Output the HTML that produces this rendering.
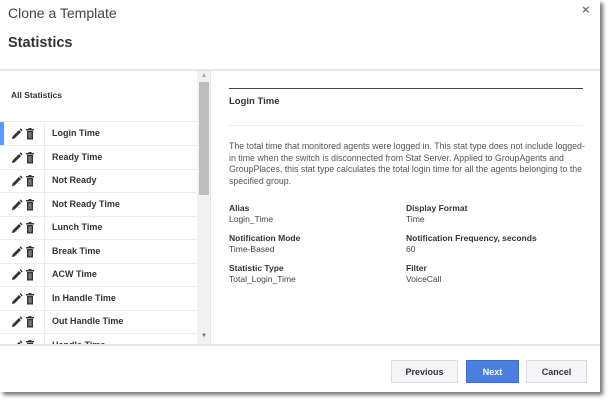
<!DOCTYPE html>
<html><head><style>
*{margin:0;padding:0;box-sizing:border-box}
body{width:615px;height:406px;background:#fff;font-family:"Liberation Sans",sans-serif;position:relative;overflow:hidden;color:#333}
.dlg{position:absolute;left:0;top:0;width:600px;height:392px;background:#fff;box-shadow:3px 3px 4px rgba(0,0,0,.55)}
.a{position:absolute;white-space:nowrap}
.row{position:absolute;left:0;width:197px;height:24px;border-bottom:1px solid #ececec;font-size:9px;font-weight:bold;color:#333}
.row .t{position:absolute;left:52px;top:6px}
.row .c{position:absolute;left:44px;top:0;bottom:0;border-left:1px solid #ececec}
.ic{position:absolute;left:11px;top:6px}
.lb{font-size:8.5px;font-weight:bold;color:#333}
.v{font-size:8.5px;color:#444}
.btn{position:absolute;top:360px;height:23px;font-size:9px;font-weight:bold;text-align:center;line-height:23px;border:1px solid #ddd;background:#f3f5f8;color:#333}
</style></head><body>
<div class="dlg">
<div class="a" style="left:8px;top:5px;font-size:14px;color:#444">Clone a Template</div>
<div class="a" style="left:582px;top:2px;font-size:13px;font-weight:bold;color:#777">×</div>
<div class="a" style="left:8px;top:35px;font-size:14.5px;font-weight:bold;color:#333">Statistics</div>
<div class="a" style="left:0;top:69px;width:600px;height:2px;background:#e6e6e6"></div>
<div class="a" style="left:11px;top:90px;font-size:8.5px;font-weight:bold">All Statistics</div>
<div class="a" style="left:0;top:121px;width:197px;border-top:1px solid #ececec"></div>
<div class="a" style="left:0;top:122px;width:4px;height:23px;background:#5a9cf8"></div>
<div class="a" style="left:197px;top:71px;width:13px;height:273px;background:#f1f1f1"></div>
<div class="a" style="left:199px;top:82px;width:10px;height:113px;background:#bdbdbd"></div>
<div class="a" style="left:201px;top:73px;font-size:6px;color:#999">▲</div>
<div class="a" style="left:201px;top:333px;font-size:6px;color:#666">▼</div>
<div class="a" style="left:210px;top:71px;width:1px;height:273px;background:#e6e6e6"></div>
<div style="position:absolute;left:0;top:0;width:197px;height:344px;overflow:hidden">
<div id="rows"></div>
</div>
<div class="a" style="left:229px;top:88px;width:354px;height:1px;background:#444"></div>
<div class="a" style="left:229px;top:96px;font-size:9.5px;font-weight:bold">Login Time</div>
<div class="a" style="left:229px;top:125px;width:354px;height:1px;background:#eee"></div>
<div class="a" style="left:229px;top:141px;width:356px;white-space:normal;font-size:8.8px;line-height:11.6px;color:#555">The total time that monitored agents were logged in. This stat type does not include logged-in time when the switch is disconnected from Stat Server. Applied to GroupAgents and GroupPlaces, this stat type calculates the total login time for all the agents belonging to the specified group.</div>
<div class="a lb" style="left:229px;top:203px">Alias</div><div class="a v" style="left:229px;top:214px">Login_Time</div>
<div class="a lb" style="left:406px;top:203px">Display Format</div><div class="a v" style="left:406px;top:214px">Time</div>
<div class="a lb" style="left:229px;top:233px">Notification Mode</div><div class="a v" style="left:229px;top:244px">Time-Based</div>
<div class="a lb" style="left:406px;top:233px">Notification Frequency, seconds</div><div class="a v" style="left:406px;top:244px">60</div>
<div class="a lb" style="left:229px;top:263px">Statistic Type</div><div class="a v" style="left:229px;top:274px">Total_Login_Time</div>
<div class="a lb" style="left:406px;top:263px">Filter</div><div class="a v" style="left:406px;top:274px">VoiceCall</div>
<div class="a" style="left:0;top:344px;width:600px;height:2px;background:#e6e6e6"></div>
<div class="btn" style="left:391px;width:67px">Previous</div>
<div class="btn" style="left:466px;width:53px;background:#4a7fe0;border-color:#3a6fd0;color:#fff">Next</div>
<div class="btn" style="left:526px;width:61px">Cancel</div>
</div>
<script>
var n=["Login Time","Ready Time","Not Ready","Not Ready Time","Lunch Time","Break Time","ACW Time","In Handle Time","Out Handle Time","Handle Time"];
var h="";
var ic='<svg class="ic" width="28" height="12" viewBox="0 0 28 12"><path d="M1 11 L1.5 8.5 L8 2 L10 4 L3.5 10.5 Z" fill="#333"/><path d="M8.6 1.4 L9.6 0.4 L11.6 2.4 L10.6 3.4 Z" fill="#333"/><rect x="15" y="1" width="8" height="1.5" fill="#333"/><rect x="17.5" y="0" width="3" height="1.5" fill="#333"/><path d="M16 3 H22 V11.5 H16 Z" fill="#333"/><rect x="17.3" y="4.2" width="3.4" height="6" fill="#777"/></svg>';
for(var i=0;i<n.length;i++){var t=122+i*23.5;h+='<div class="row" style="top:'+t+'px">'+ic+'<div class="c"></div><div class="t">'+n[i]+'</div></div>';}
document.getElementById("rows").innerHTML=h;
</script>
</body></html>
